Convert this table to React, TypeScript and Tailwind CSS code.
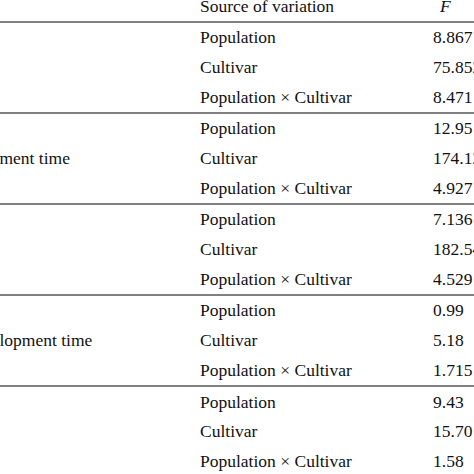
import React from "react";

type Group = { name: string; values: string[] };

const groups: Group[] = [
  { name: "Survival rate", values: ["8.867", "75.852", "8.471"] },
  { name: "Larval development time", values: ["12.95", "174.12", "4.927"] },
  { name: "Pupal weight", values: ["7.136", "182.54", "4.529"] },
  { name: "Immature development time", values: ["0.99", "5.18", "1.715"] },
  { name: "Fecundity", values: ["9.43", "15.70", "1.58"] },
];

const sources = ["Population", "Cultivar", "Population × Cultivar"];

export default function App() {
  return (
    <div
      className="w-[474px] h-[474px] overflow-hidden bg-white text-[#111111] text-[17.5px] leading-none"
      style={{ fontFamily: '"Liberation Serif", "Times New Roman", serif' }}
    >
      <div className="-ml-[106px] -mt-[8.5px] w-[620px] flex flex-col">
        <div className="flex h-[29.7px] items-center">
          <div className="w-[306px] shrink-0">Trait</div>
          <div className="w-[233px] shrink-0">Source of variation</div>
          <div className="pl-[7px] italic">F</div>
        </div>
        {groups.map((g) => (
          <div key={g.name} className="flex border-t-2 border-[#808080]">
            <div className="w-[306px] shrink-0 flex items-center whitespace-nowrap">{g.name}</div>
            <div className="flex flex-col">
              {sources.map((s, i) => (
                <div key={s} className="flex h-[29.7px] items-center whitespace-nowrap">
                  <div className="w-[233px] shrink-0">{s}</div>
                  <div>{g.values[i]}</div>
                </div>
              ))}
            </div>
          </div>
        ))}
      </div>
    </div>
  );
}
